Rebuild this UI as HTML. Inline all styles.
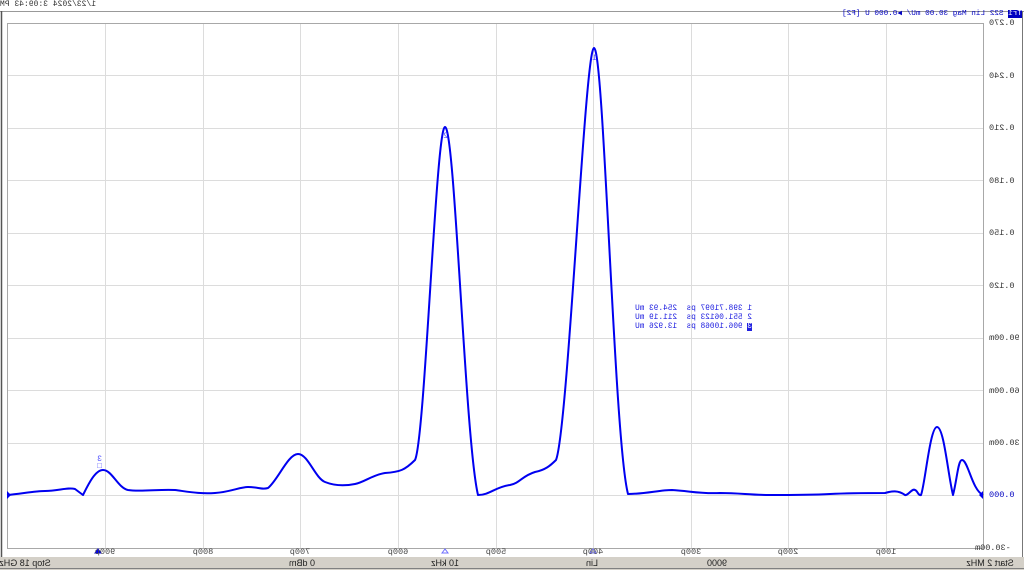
<!DOCTYPE html>
<html><head><meta charset="utf-8"><style>
*{margin:0;padding:0}
body{width:1024px;height:570px;overflow:hidden;background:#fff;position:relative;font-family:"Liberation Mono",monospace}
svg{position:absolute;left:0;top:0}
#m{position:absolute;left:0;top:0;width:1024px;height:570px;transform:scaleX(-1);transform-origin:512px 0}
#m div{position:absolute;white-space:pre;line-height:9px}
.y{font-size:8.5px;color:#333;right:989px}
.x{font-size:8.5px;color:#444;transform:translateX(-50%)}
.s{font-family:"Liberation Sans",sans-serif;font-size:9px;color:#222;top:559px;transform:translateX(-50%)}
</style></head><body>
<svg width="1024" height="570">
<rect x="0" y="557" width="1024" height="13" fill="#d4d0c8"/>
<line x1="0" y1="568.5" x2="1024" y2="568.5" stroke="#808080"/>
<line x1="0" y1="11.5" x2="1024" y2="11.5" stroke="#999"/>
<line x1="1.5" y1="11" x2="1.5" y2="557" stroke="#555" stroke-width="1.5"/>
<line x1="1022.5" y1="11" x2="1022.5" y2="557" stroke="#777"/>
<g stroke="#dcdcdc" stroke-width="1">
<line x1="105.5" y1="23" x2="105.5" y2="548"/><line x1="203.5" y1="23" x2="203.5" y2="548"/><line x1="300.5" y1="23" x2="300.5" y2="548"/><line x1="398.5" y1="23" x2="398.5" y2="548"/><line x1="496.5" y1="23" x2="496.5" y2="548"/><line x1="593.5" y1="23" x2="593.5" y2="548"/><line x1="691.5" y1="23" x2="691.5" y2="548"/><line x1="788.5" y1="23" x2="788.5" y2="548"/><line x1="886.5" y1="23" x2="886.5" y2="548"/>
<line x1="7" y1="75.5" x2="983" y2="75.5"/><line x1="7" y1="128.5" x2="983" y2="128.5"/><line x1="7" y1="180.5" x2="983" y2="180.5"/><line x1="7" y1="233.5" x2="983" y2="233.5"/><line x1="7" y1="285.5" x2="983" y2="285.5"/><line x1="7" y1="338.5" x2="983" y2="338.5"/><line x1="7" y1="390.5" x2="983" y2="390.5"/><line x1="7" y1="443.5" x2="983" y2="443.5"/><line x1="7" y1="495.5" x2="983" y2="495.5"/>
</g>
<rect x="7.5" y="23.5" width="976" height="525" fill="none" stroke="#a8a8a8"/>
<path fill="none" stroke="#0000f0" stroke-width="2" stroke-linejoin="round" d="M7,495 C20,494 35,491 45,491 C58,491 68,487 75,489 L83,495 C88,485 95,470 103,470 C112,470 118,488 128,490 C140,492 160,489 175,490 C190,492 200,494 215,493 C230,492 240,487 248,487 C258,487 262,490 268,488 C278,480 288,454 298,454 C308,454 315,478 325,482 C335,486 345,486 355,484 C365,482 372,475 385,473 C400,472 405,470 415,460 C425,440 436,127 445,127 C455,127 465,440 478,495 C490,495 495,487 510,485 C520,483 522,476 535,472 C545,470 550,466 556,460 C568,430 585,48 594,48 C604,48 614,440 628,494 C645,494 660,490 672,490 C690,491 700,494 720,493 C740,493 750,495 770,495 C790,495 810,495 830,494 C850,493 870,493 885,493 C892,491 898,490 905,495 C908,496 912,488 915,490 C918,491 918,496 921,495 C925,485 930,427 937,427 C944,427 948,475 953,495 C957,480 958,460 962,460 C968,460 972,490 983,495"/>
<path d="M7,491 L11,495 L7,499Z M983,491 L979,495 L983,499Z" fill="#0000f0"/>
<path d="M95,553 L98,549 L101,553Z" fill="#0000f0" stroke="#0000f0"/>
<path d="M442,553 L445,549 L448,553Z" fill="none" stroke="#7070ff"/>
<path d="M590,553 L593,549 L596,553Z" fill="none" stroke="#7070ff"/>
</svg>
<div id="m">
<div style="right:0;top:0;font-size:8px;color:#333">1/23/2024 3:09:43 PM</div>
<div style="left:2px;top:10px;font-size:7.7px;color:#0000c0"><span style="background:#0000c0;color:#fff">Tr1</span> S22 Lin Mag 30.00 mU/ ▶0.000 U [F2]</div>
<div class="y" style="top:19px">0.270</div>
<div class="y" style="top:72px">0.240</div>
<div class="y" style="top:124px">0.210</div>
<div class="y" style="top:177px">0.180</div>
<div class="y" style="top:229px">0.150</div>
<div class="y" style="top:282px">0.120</div>
<div class="y" style="top:334px">90.00m</div>
<div class="y" style="top:387px">60.00m</div>
<div class="y" style="top:439px">30.00m</div>
<div class="y" style="top:491px;color:#0000c0">0.000</div>
<div class="y" style="top:544px;right:975px">-30.00m</div>
<div class="x" style="left:919px;top:548px">900p</div>
<div class="x" style="left:821px;top:548px">800p</div>
<div class="x" style="left:724px;top:548px">700p</div>
<div class="x" style="left:626px;top:548px">600p</div>
<div class="x" style="left:528px;top:548px">500p</div>
<div class="x" style="left:431px;top:548px">400p</div>
<div class="x" style="left:333px;top:548px">300p</div>
<div class="x" style="left:236px;top:548px">200p</div>
<div class="x" style="left:138px;top:548px">100p</div>
<div style="left:272px;top:305px;font-size:7.8px;color:#2020e0">1 398.71097 ps  254.93 mU
2 551.06123 ps  211.19 mU
<span style="background:#2020e0;color:#fff">3</span> 906.10068 ps  13.926 mU</div>
<div style="left:427px;top:54px;font-size:8px;color:#5050ff">1</div>
<div style="left:576px;top:132px;font-size:8px;color:#5050ff">2</div>
<div style="left:922px;top:456px;font-size:8px;color:#5050ff;line-height:7px">3
□</div>
<div class="s" style="left:999px">Stop 18 GHz</div>
<div class="s" style="left:722px">0 dBm</div>
<div class="s" style="left:579px">10 kHz</div>
<div class="s" style="left:432px">Lin</div>
<div class="s" style="left:307px">9000</div>
<div class="s" style="left:34px">Start 2 MHz</div>
</div>
</body></html>
